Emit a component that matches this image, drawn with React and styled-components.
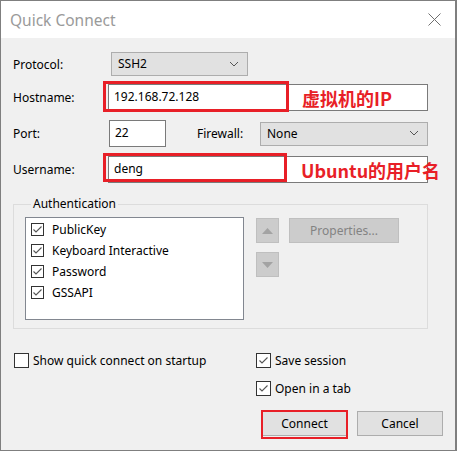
import React from 'react';
import styled, { createGlobalStyle } from 'styled-components';

const Global = createGlobalStyle`
  html, body { margin: 0; padding: 0; background: #f0f0f0; }
  * { box-sizing: border-box; }
`;

const Window = styled.div`
  width: 457px;
  height: 451px;
  border: 1px solid #7f7f7f;
  border-right-width: 2px;
  background: #f0f0f0;
  font-family: "Noto Sans", "Open Sans", sans-serif;
  font-size: 12px;
  color: #000;
  display: flex;
  flex-direction: column;
`;

const TitleBar = styled.div`
  height: 37px;
  background: #fff;
  display: flex;
  align-items: center;
  justify-content: space-between;
  padding: 0 14px 0 9px;
`;

const Title = styled.div`
  font-size: 15.5px;
  color: #9a9a9a;
`;

const Body = styled.div`
  padding: 14px 27px 0 12px;
  display: flex;
  flex-direction: column;
`;

const Row = styled.div`
  display: flex;
  align-items: center;
  height: ${p => p.$h}px;
  margin-top: ${p => p.$mt || 0}px;
`;

const Label = styled.div`
  width: ${p => p.$w || 95}px;
  flex: none;
`;

const Field = styled.div`
  position: relative;
  width: ${p => p.$w}px;
  height: ${p => p.$h}px;
  margin-left: ${p => p.$ml || 0}px;
  flex: none;
`;

const TextBox = styled.input`
  width: 100%;
  height: 100%;
  border: 1px solid #7a7a7a;
  background: #fff;
  font: inherit;
  padding: 0 0 2px 5px;
  margin: 0;
  outline: none;
  color: #000;
`;

const Select = styled.div`
  width: ${p => p.$w}px;
  height: ${p => p.$h}px;
  margin-left: ${p => p.$ml || 0}px;
  background: #e1e1e1;
  border: 1px solid #adadad;
  display: flex;
  align-items: center;
  justify-content: space-between;
  padding: 0 8px 1px 6px;
  flex: none;
`;

const Mark = styled.div`
  position: absolute;
  left: -5px;
  top: -3px;
  width: ${p => p.$w}px;
  height: ${p => p.$h}px;
  border: 3px solid #e81f27;
  pointer-events: none;
`;

const Note = styled.div`
  position: absolute;
  left: ${p => p.$l}px;
  top: 50%;
  transform: translateY(-50%);
  color: #e81f27;
  font-family: "Noto Sans CJK SC", sans-serif;
  font-weight: 700;
  font-size: 18px;
  white-space: nowrap;
`;

const Group = styled.fieldset`
  margin: 13px 0 0 0;
  padding: 5px 0 8px 11px;
  border: 1px solid #dcdcdc;
  display: flex;
  align-items: flex-start;
`;

const Legend = styled.legend`
  margin-left: 6px;
  padding: 0 2px;
  line-height: 16px;
`;

const ListBox = styled.div`
  width: 219px;
  height: 103px;
  background: #fff;
  border: 1px solid #828790;
  padding: 1px 0 0 5px;
  flex: none;
`;

const ListItem = styled.div`
  height: 21px;
  display: flex;
  align-items: center;
  gap: 8px;
`;

const Box = styled.span`
  width: ${p => p.$s}px;
  height: ${p => p.$s}px;
  border: 1px solid #333;
  background: #fff;
  display: inline-flex;
  align-items: center;
  justify-content: center;
  flex: none;
`;

const ArrowCol = styled.div`
  display: flex;
  flex-direction: column;
  gap: 9px;
  margin: 1px 0 0 12px;
`;

const ArrowBtn = styled.div`
  width: 23px;
  height: 25px;
  background: #cccccc;
  border: 1px solid #bfbfbf;
  display: flex;
  align-items: center;
  justify-content: center;
`;

const Button = styled.div`
  width: ${p => p.$w}px;
  height: 25px;
  background: ${p => (p.$disabled ? '#cccccc' : '#e1e1e1')};
  border: 1px solid ${p => (p.$disabled ? '#bfbfbf' : '#adadad')};
  color: ${p => (p.$disabled ? '#838383' : '#000')};
  display: flex;
  align-items: center;
  justify-content: center;
  padding-bottom: 1px;
  margin-left: ${p => p.$ml || 0}px;
  position: relative;
  flex: none;
`;

const Options = styled.div`
  display: grid;
  grid-template-columns: 242px auto;
  grid-auto-rows: 28px;
  margin-top: 17px;
  margin-left: 1px;
`;

const Option = styled.div`
  display: flex;
  align-items: center;
  gap: 4px;
  grid-column: ${p => p.$col};
`;

const Footer = styled.div`
  display: flex;
  justify-content: flex-end;
  margin: 9px -15px 0 0;
`;

const ButtonMark = styled.div`
  position: absolute;
  left: -2px;
  top: -2px;
  right: -2px;
  bottom: -4px;
  border: 2px solid #e81f27;
`;

const Chevron = () => (
  <svg width="10" height="6" viewBox="0 0 10 6">
    <polyline points="1,1 5,5 9,1" fill="none" stroke="#555" strokeWidth="1" />
  </svg>
);

const Check = ({ checked, size = 13 }) => (
  <Box $s={size}>
    {checked && (
      <svg width="11" height="11" viewBox="0 0 11 11">
        <polyline points="1.5,5.5 4,8 9.5,2.5" fill="none" stroke="#555" strokeWidth="1.1" />
      </svg>
    )}
  </Box>
);

const methods = ['PublicKey', 'Keyboard Interactive', 'Password', 'GSSAPI'];

export default function App() {
  return (
    <>
      <Global />
      <Window>
        <TitleBar>
          <Title>Quick Connect</Title>
          <svg width="13" height="13" viewBox="0 0 13 13">
            <path d="M0.5 0.5 L12.5 12.5 M12.5 0.5 L0.5 12.5" stroke="#6f6f6f" strokeWidth="1" />
          </svg>
        </TitleBar>
        <Body>
          <Row $h={24}>
            <Label>Protocol:</Label>
            <Select $w={137} $h={24} $ml={3}>
              <span>SSH2</span>
              <Chevron />
            </Select>
          </Row>
          <Row $h={27} $mt={8}>
            <Label>Hostname:</Label>
            <Field $w={320} $h={27}>
              <TextBox readOnly value="192.168.72.128" />
              <Mark $w={186} $h={31} />
              <Note $l={194}>虚拟机的IP</Note>
            </Field>
          </Row>
          <Row $h={27} $mt={9}>
            <Label>Port:</Label>
            <Field $w={57} $h={27} $ml={1}>
              <TextBox readOnly value="22" />
            </Field>
            <Label $w={63} style={{ marginLeft: 31 }}>Firewall:</Label>
            <Select $w={168} $h={24}>
              <span>None</span>
              <Chevron />
            </Select>
          </Row>
          <Row $h={27} $mt={9}>
            <Label>Username:</Label>
            <Field $w={320} $h={27}>
              <TextBox readOnly value="deng" />
              <Mark $w={184} $h={29} />
              <Note $l={193}>Ubuntu的用户名</Note>
            </Field>
          </Row>
          <Group>
            <Legend>Authentication</Legend>
            <ListBox>
              {methods.map(m => (
                <ListItem key={m}>
                  <Check checked />
                  <span>{m}</span>
                </ListItem>
              ))}
            </ListBox>
            <ArrowCol>
              <ArrowBtn>
                <svg width="11" height="6" viewBox="0 0 11 6"><polygon points="0,6 5.5,0 11,6" fill="#a3a3a3" /></svg>
              </ArrowBtn>
              <ArrowBtn>
                <svg width="11" height="6" viewBox="0 0 11 6"><polygon points="0,0 11,0 5.5,6" fill="#a3a3a3" /></svg>
              </ArrowBtn>
            </ArrowCol>
            <Button $w={110} $disabled $ml={10} style={{ marginTop: 1 }}>Properties...</Button>
          </Group>
          <Options>
            <Option $col={1}>
              <Check size={15} />
              <span>Show quick connect on startup</span>
            </Option>
            <Option $col={2}>
              <Check checked size={15} />
              <span>Save session</span>
            </Option>
            <Option $col={2}>
              <Check checked size={15} />
              <span>Open in a tab</span>
            </Option>
          </Options>
          <Footer>
            <Button $w={85}>
              Connect
              <ButtonMark />
            </Button>
            <Button $w={86} $ml={10}>Cancel</Button>
          </Footer>
        </Body>
      </Window>
    </>
  );
}
